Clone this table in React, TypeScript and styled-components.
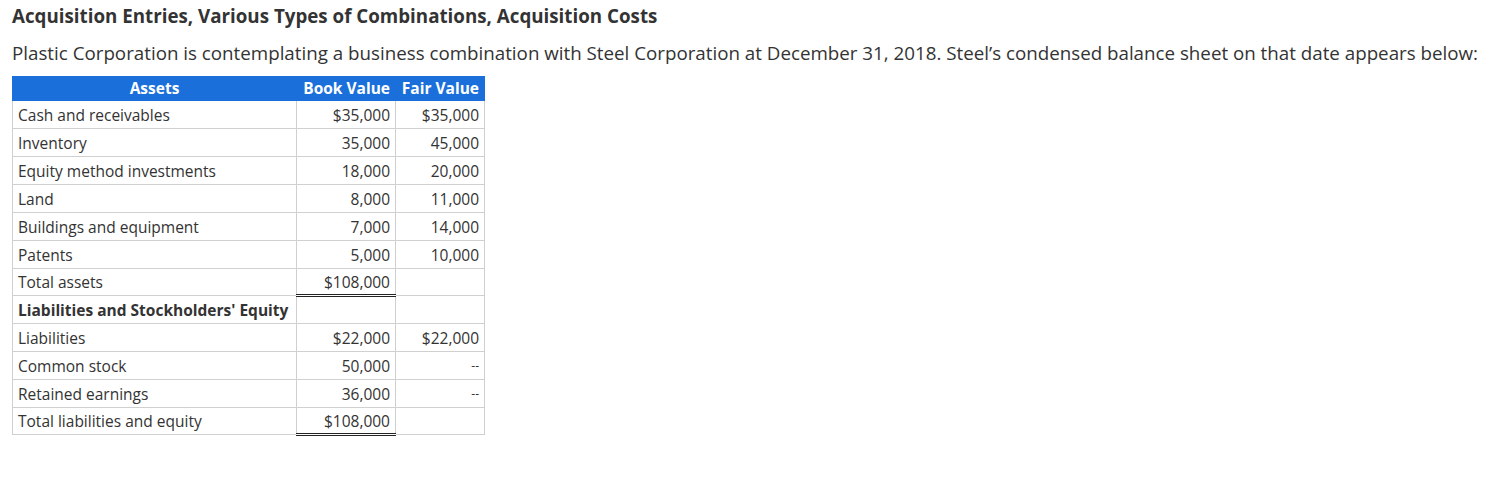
import React from "react";
import styled, { createGlobalStyle } from "styled-components";

const GlobalStyle = createGlobalStyle`
  body {
    margin: 0;
    background: #ffffff;
    font-family: "Open Sans", "Liberation Sans", sans-serif;
    color: #333333;
  }
`;

type Row = {
  label: string;
  book?: string;
  fair?: string;
  bold?: boolean;
  total?: boolean;
};

const rows: Row[] = [
  { label: "Cash and receivables", book: "$35,000", fair: "$35,000" },
  { label: "Inventory", book: "35,000", fair: "45,000" },
  { label: "Equity method investments", book: "18,000", fair: "20,000" },
  { label: "Land", book: "8,000", fair: "11,000" },
  { label: "Buildings and equipment", book: "7,000", fair: "14,000" },
  { label: "Patents", book: "5,000", fair: "10,000" },
  { label: "Total assets", book: "$108,000", total: true },
  { label: "Liabilities and Stockholders' Equity", bold: true },
  { label: "Liabilities", book: "$22,000", fair: "$22,000" },
  { label: "Common stock", book: "50,000", fair: "--" },
  { label: "Retained earnings", book: "36,000", fair: "--" },
  { label: "Total liabilities and equity", book: "$108,000", total: true },
];

export default function App() {
  return (
    <Page>
      <GlobalStyle />
      <Title>Acquisition Entries, Various Types of Combinations, Acquisition Costs</Title>
      <Intro>
        Plastic Corporation is contemplating a business combination with Steel Corporation at
        December 31, 2018. Steel’s condensed balance sheet on that date appears below:
      </Intro>
      <Table>
        <colgroup>
          <col style={{ width: 284 }} />
          <col style={{ width: 99 }} />
          <col style={{ width: 89 }} />
        </colgroup>
        <thead>
          <tr>
            <Head $align="center">Assets</Head>
            <Head $align="right">Book Value</Head>
            <Head $align="right">Fair Value</Head>
          </tr>
        </thead>
        <tbody>
          {rows.map((r) => (
            <BodyRow key={r.label} $total={r.total}>
              <Cell $bold={r.bold}>{r.label}</Cell>
              <NumCell $total={r.total}>{r.book}</NumCell>
              <NumCell $small={r.fair === "--"}>{r.fair}</NumCell>
            </BodyRow>
          ))}
        </tbody>
      </Table>
    </Page>
  );
}

const Page = styled.div`
  padding: 4px 12px 20px;
`;

const Title = styled.h1`
  margin: 0;
  font-size: 18.75px;
  line-height: 24px;
  font-weight: 700;
  color: #333333;
`;

const Intro = styled.p`
  margin: 12px 0 0;
  font-size: 18.75px;
  line-height: 26px;
  color: #333333;
  white-space: nowrap;
`;

const Table = styled.table`
  margin-top: 10px;
  border-collapse: collapse;
  table-layout: fixed;
  width: 473px;
  font-size: 15.5px;
  color: #333333;
`;

const Head = styled.th<{ $align: string }>`
  background: #1a6fdb;
  color: #ffffff;
  font-weight: 700;
  font-size: 15.5px;
  height: 23px;
  padding: 0 5px;
  text-align: ${(p) => p.$align};
  border: 1px solid #1a6fdb;
  white-space: nowrap;
  line-height: 21px;
`;

const BodyRow = styled.tr<{ $total?: boolean }>`
  height: ${(p) => (p.$total ? "27px" : "28px")};
`;

const Cell = styled.td<{ $bold?: boolean }>`
  padding: 0 5px;
  border: 1px solid #d0d0d0;
  white-space: nowrap;
  font-weight: ${(p) => (p.$bold ? 700 : 400)};
  line-height: 20px;
`;

const NumCell = styled.td<{ $total?: boolean; $small?: boolean }>`
  padding: 0 5px;
  text-align: right;
  border: 1px solid #d0d0d0;
  white-space: nowrap;
  line-height: 20px;
  font-size: ${(p) => (p.$small ? "12px" : "15.5px")};
  ${(p) =>
    p.$total &&
    `
    border-top: 1px solid #222222;
    border-bottom: 3px double #222222;
  `}
`;
